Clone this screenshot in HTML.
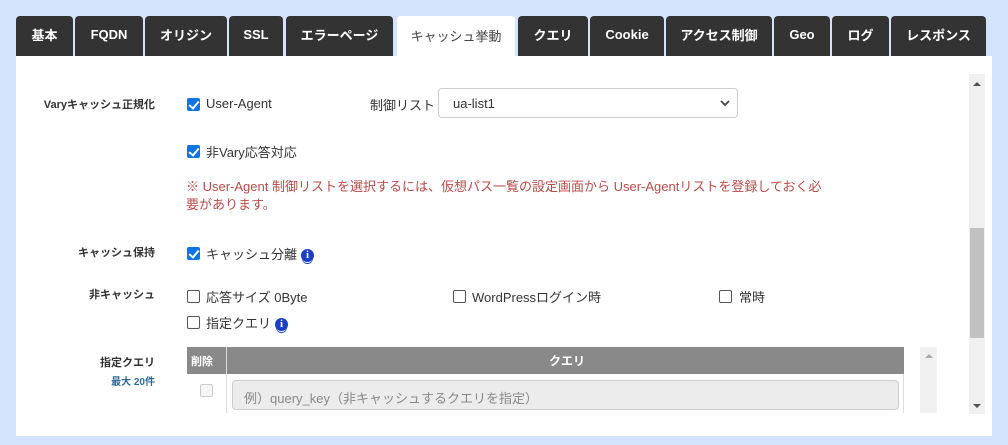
<!DOCTYPE html>
<html><head><meta charset="utf-8"><style>
*{box-sizing:border-box;margin:0;padding:0}
body{width:1008px;height:445px;background:#d3e3fb;font-family:"Liberation Sans","Noto Sans CJK JP",sans-serif;position:relative;overflow:hidden;color:#333}
.a{position:absolute;white-space:nowrap}
.tab{position:absolute;top:16px;height:40px;background:#333;color:#fff;border-radius:4px 4px 0 0;font-size:13px;font-weight:bold;display:flex;align-items:center;justify-content:center;padding-bottom:3px}
.tab.on{background:#fff;color:#444;font-weight:normal}
.panel{position:absolute;left:16px;top:56px;width:976px;height:380px;background:#fff}
.lbl{position:absolute;font-size:11px;font-weight:bold;color:#333;text-align:right;width:150px;left:5px}
.cb{position:absolute;width:13px;height:13px;border:1px solid #555;border-radius:2px;background:#fff}
.cb.on{background:#0b75e8;border-color:#0b75e8}
.cb.on::after{content:"";position:absolute;left:3px;top:0px;width:4px;height:8px;border:solid #fff;border-width:0 2px 2px 0;transform:rotate(40deg)}
.t{position:absolute;font-size:13px;color:#333;white-space:nowrap}
.info{display:inline-block;width:13px;height:13px;border-radius:50%;background:#1b3fc4;color:#fff;font-size:11px;font-weight:bold;text-align:center;line-height:13px;font-family:"Liberation Serif",serif;vertical-align:1px;margin-left:4px;box-shadow:0 2px 0 -1px #fff,0 3px 0 -1px #1b3fc4}
</style></head><body>
<div class="tab" style="left:16px;width:57px">基本</div>
<div class="tab" style="left:75px;width:68px">FQDN</div>
<div class="tab" style="left:145px;width:82px">オリジン</div>
<div class="tab" style="left:229px;width:54px">SSL</div>
<div class="tab" style="left:286px;width:107px">エラーページ</div>
<div class="tab on" style="left:397px;width:118px;height:41px">キャッシュ挙動</div>
<div class="tab" style="left:518px;width:70px">クエリ</div>
<div class="tab" style="left:590px;width:74px">Cookie</div>
<div class="tab" style="left:666px;width:106px">アクセス制御</div>
<div class="tab" style="left:774px;width:56px">Geo</div>
<div class="tab" style="left:832px;width:57px">ログ</div>
<div class="tab" style="left:891px;width:95px">レスポンス</div>
<div class="panel"></div>
<div class="a" style="left:969px;top:74px;width:16px;height:340px;background:#f0f0f0"></div>
<div class="a" style="left:970px;top:228px;width:14px;height:110px;background:#c1c1c1"></div>
<div class="a" style="left:973px;top:82px;border:4px solid transparent;border-bottom:4px solid #505050;border-top:0"></div>
<div class="a" style="left:973px;top:404px;border:4px solid transparent;border-top:4px solid #505050;border-bottom:0"></div>

<div class="lbl" style="top:96px">Varyキャッシュ正規化</div>
<div class="cb on" style="left:187px;top:98px"></div>
<div class="t" style="left:206px;top:96px">User-Agent</div>
<div class="t" style="left:370px;top:95px">制御リスト</div>
<div class="a" style="left:438px;top:88px;width:300px;height:30px;border:1px solid #ccc;border-radius:4px;font-size:13px;padding:7px 0 0 14px">ua-list1</div>
<svg class="a" style="left:720px;top:99px" width="10" height="8"><path d="M1 2 L5 6 L9 2" stroke="#444" stroke-width="1.8" fill="none"/></svg>
<div class="cb on" style="left:187px;top:145px"></div>
<div class="t" style="left:206px;top:142px">非Vary応答対応</div>
<div class="t" style="left:186px;top:178px;color:#b94a48;line-height:18px;white-space:normal;width:640px">※ User-Agent 制御リストを選択するには、仮想パス一覧の設定画面から User-Agentリストを登録しておく必要があります。</div>

<div class="lbl" style="top:244px">キャッシュ保持</div>
<div class="cb on" style="left:187px;top:247px"></div>
<div class="t" style="left:206px;top:244px">キャッシュ分離<span class="info">i</span></div>

<div class="lbl" style="top:286px">非キャッシュ</div>
<div class="cb" style="left:187px;top:290px"></div>
<div class="t" style="left:206px;top:287px">応答サイズ 0Byte</div>
<div class="cb" style="left:453px;top:290px"></div>
<div class="t" style="left:472px;top:287px">WordPressログイン時</div>
<div class="cb" style="left:719px;top:290px"></div>
<div class="t" style="left:739px;top:287px">常時</div>
<div class="cb" style="left:187px;top:316px"></div>
<div class="t" style="left:206px;top:313px">指定クエリ<span class="info">i</span></div>

<div class="lbl" style="top:354px">指定クエリ</div>
<div class="lbl" style="top:373px;font-size:10px;color:#2b6a99">最大 20件</div>
<div class="a" style="left:187px;top:347px;width:717px;height:27px;background:#898989"></div>
<div class="a" style="left:226px;top:347px;width:1px;height:66px;background:#ddd"></div>
<div class="a" style="left:903px;top:374px;width:1px;height:39px;background:#ddd"></div>
<div class="t" style="left:191px;top:353px;color:#fff;font-size:11px;font-weight:bold">削除</div>
<div class="t" style="left:549px;top:352px;color:#fff;font-size:12px;font-weight:bold">クエリ</div>
<div class="a" style="left:200px;top:384px;width:13px;height:13px;border:1px solid #ccc;border-radius:2px;background:#f6f6f6"></div>
<div class="a" style="left:232px;top:380px;width:667px;height:30px;border:1px solid #ccc;border-radius:4px;background:#ececec;font-size:13px;color:#888;padding:7px 0 0 11px">例）query_key（非キャッシュするクエリを指定）</div>
<div class="a" style="left:920px;top:347px;width:17px;height:66px;background:#f0f0f0"></div>
<div class="a" style="left:925px;top:354px;border:4px solid transparent;border-bottom:4px solid #aaa;border-top:0"></div>
</body></html>
